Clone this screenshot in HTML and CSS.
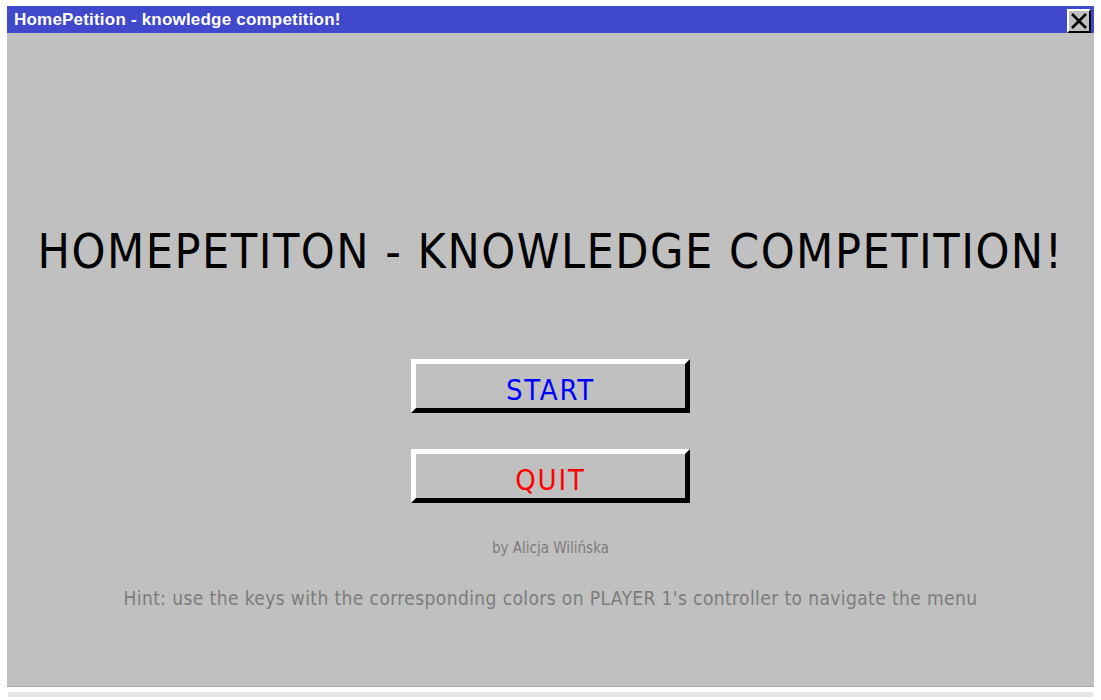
FILE: index.html
```html
<!DOCTYPE html>
<html>
<head>
<meta charset="utf-8">
<link rel="stylesheet" href="styles.css">
</head>
<body>
<div class="window">
  <div class="titlebar">
    <span class="title">HomePetition - knowledge competition!</span>
    <div class="close">
      <svg width="18" height="18" viewBox="0 0 18 18"><path d="M2 2 L16 16 M16 2 L2 16" stroke="#000" stroke-width="2.6"/></svg>
    </div>
  </div>
  <div class="client">
    <h1 class="heading">HOMEPETITON - KNOWLEDGE COMPETITION!</h1>
    <div class="btn start">START</div>
    <div class="btn quit">QUIT</div>
    <p class="author">by Alicja Wilińska</p>
    <p class="hint">Hint: use the keys with the corresponding colors on PLAYER 1's controller to navigate the menu</p>
  </div>
</div>
</body>
</html>
```
FILE: styles.css
```css
html, body {
  margin: 0;
  padding: 0;
  background: #ffffff;
}
body {
  width: 1101px;
  height: 700px;
  overflow: hidden;
}
.window {
  margin: 6px 0 0 7px;
  width: 1087px;
  border-bottom: 5px solid #ffffff;
  box-shadow: 0 6px 0 -1px #e6e6e6;
}
.titlebar {
  height: 27px;
  background: #4048cc;
  display: flex;
  align-items: center;
  justify-content: space-between;
  padding: 0 3px 0 7px;
  box-sizing: border-box;
}
.title {
  color: #ffffff;
  font-family: "Liberation Sans", Arial, sans-serif;
  font-weight: bold;
  font-size: 17px;
  letter-spacing: 0.2px;
  padding-top: 1px;
}
.close {
  width: 24px;
  height: 24px;
  box-sizing: border-box;
  background: #c0c0c0;
  border-top: 2px solid #ffffff;
  border-left: 2px solid #ffffff;
  border-right: 2px solid #000000;
  border-bottom: 2px solid #000000;
  display: flex;
  align-items: center;
  justify-content: center;
  margin-top: 2px;
}
.client {
  height: 654px;
  background: #c0c0c0;
  border-bottom: 1px solid #a8a8a8;
  box-sizing: border-box;
  display: flex;
  flex-direction: column;
  align-items: center;
  font-family: "DejaVu Sans Condensed", "DejaVu Sans", sans-serif;
}
.heading {
  margin: 190px 0 0 0;
  font-weight: normal;
  font-size: 48px;
  letter-spacing: 1.5px;
  line-height: 56px;
  color: #000000;
  white-space: nowrap;
}
.btn {
  width: 279px;
  height: 54px;
  box-sizing: border-box;
  border-style: solid;
  border-width: 5px;
  border-color: #ffffff #000000 #000000 #ffffff;
  background: #c0c0c0;
  display: flex;
  align-items: center;
  justify-content: center;
  font-size: 29px;
  letter-spacing: 1.8px;
  padding-top: 8px;
}
.start {
  margin-top: 80px;
  color: #0000ff;
}
.quit {
  margin-top: 36px;
  color: #ff0000;
}
.author {
  margin: 36px 0 0 0;
  font-size: 15px;
  color: #7c7c7c;
}
.hint {
  margin: 30px 0 0 0;
  font-size: 19px;
  letter-spacing: 0.4px;
  color: #7c7c7c;
}
```
